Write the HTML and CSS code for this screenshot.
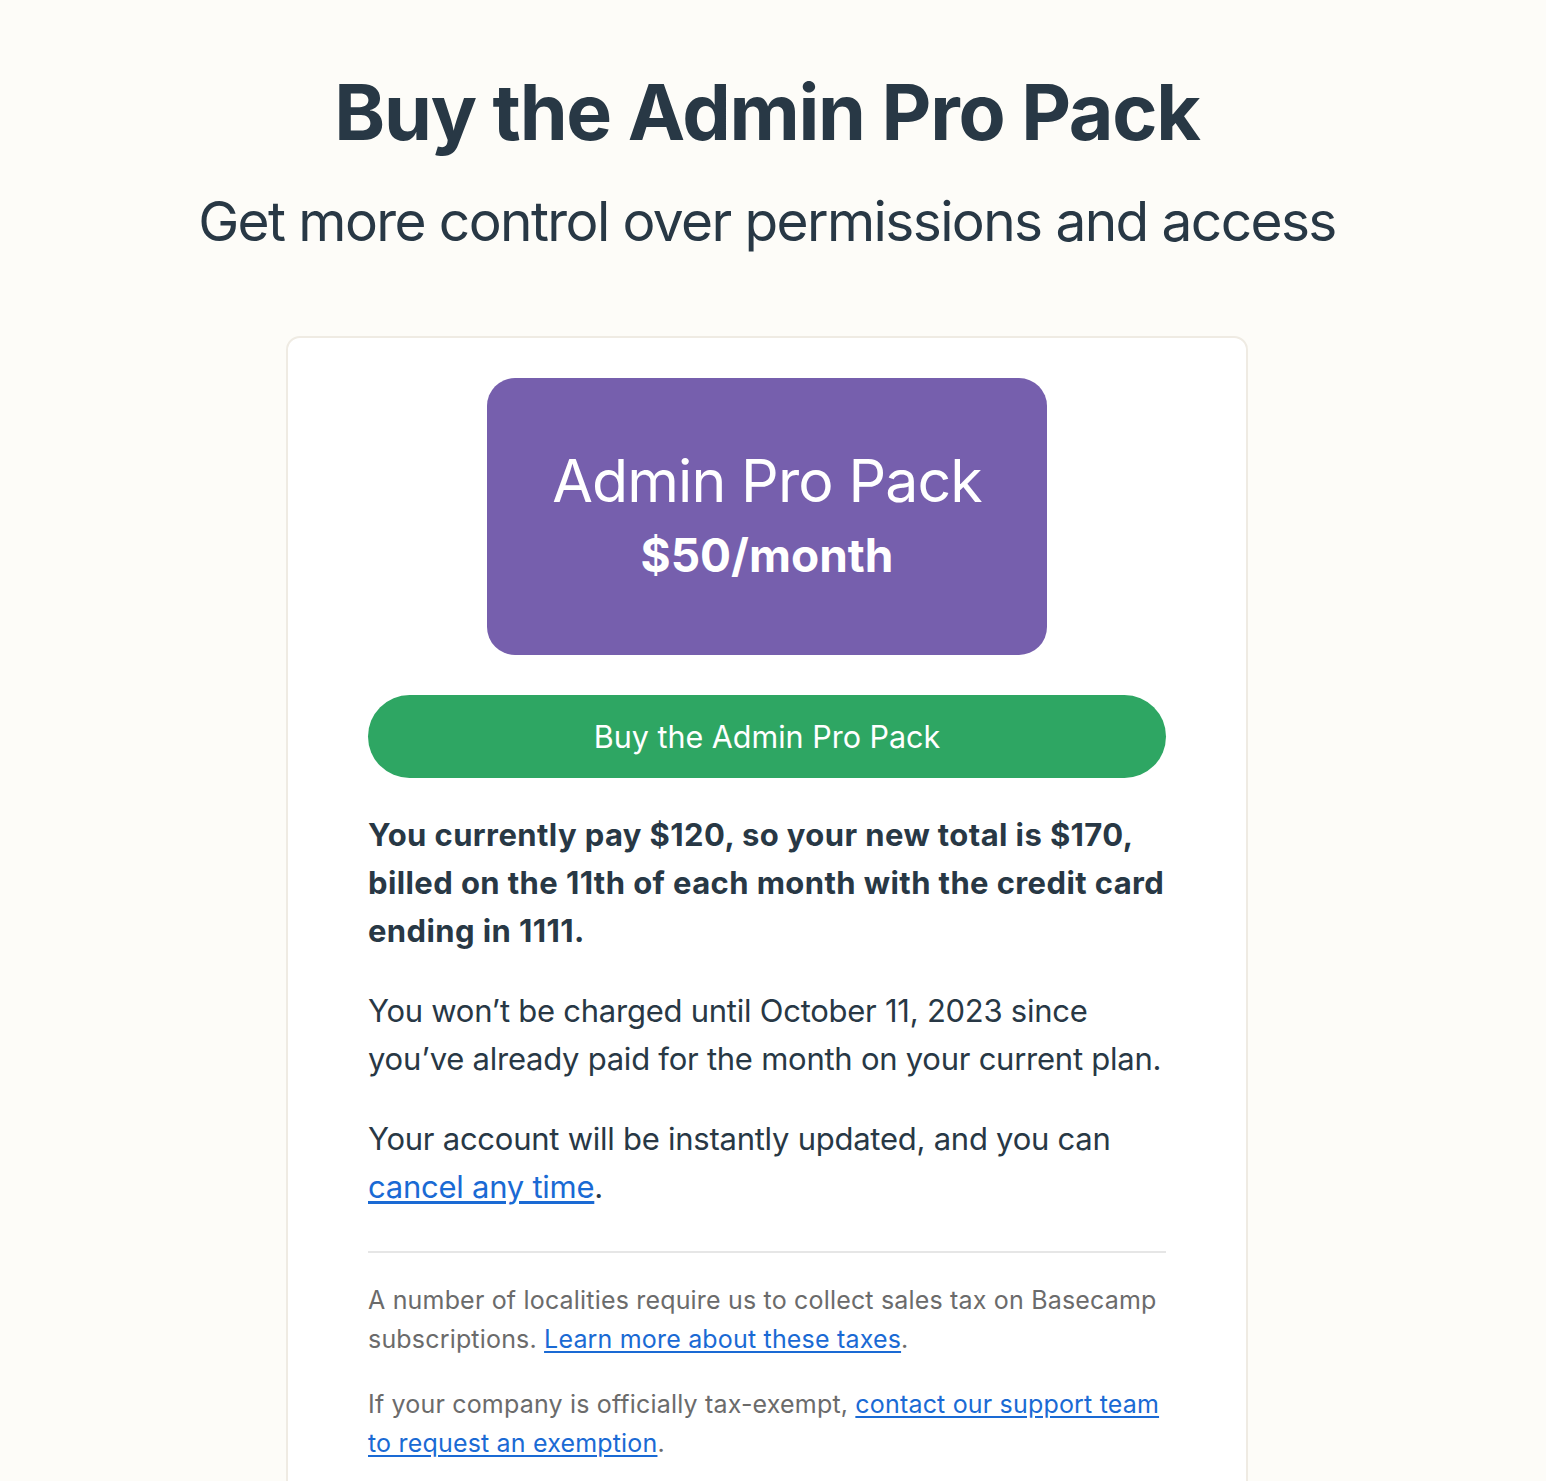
FILE: index.html
```html
<!DOCTYPE html>
<html lang="en">
<head>
<meta charset="utf-8">
<title>Buy the Admin Pro Pack</title>
<link rel="stylesheet" href="styles.css">
</head>
<body>
<main class="page">
  <header class="intro">
    <h1 class="title">Buy the Admin Pro Pack</h1>
    <p class="subtitle">Get more control over permissions and access</p>
  </header>
  <section class="card">
    <div class="pack">
      <div class="pack-name">Admin Pro Pack</div>
      <div class="pack-price">$50/month</div>
    </div>
    <button class="buy" type="button">Buy the Admin Pro Pack</button>
    <p class="text strong">You currently pay $120, so your new total is $170, billed on the 11th of each month with the credit card ending in 1111.</p>
    <p class="text">You won’t be charged until October 11, 2023 since you’ve already paid for the month on your current plan.</p>
    <p class="text">Your account will be instantly updated, and you can <a href="#" class="link">cancel any time</a>.</p>
    <hr class="divider">
    <p class="fine">A number of localities require us to collect sales tax on Basecamp subscriptions. <a href="#" class="link">Learn more about these taxes</a>.</p>
    <p class="fine">If your company is officially tax-exempt, <a href="#" class="link">contact our support team to request an exemption</a>.</p>
  </section>
</main>
</body>
</html>
```
FILE: styles.css
```css
html, body {
  margin: 0;
  padding: 0;
  background: #fdfcf8;
}
body {
  font-family: Inter, "Noto Sans", "Liberation Sans", sans-serif;
  color: #283845;
}
.page {
  display: flex;
  flex-direction: column;
  align-items: center;
  padding: 66px 12px 0 0;
}
.intro {
  text-align: center;
}
.title {
  margin: 0;
  font-size: 77px;
  font-weight: 700;
  line-height: 92px;
  letter-spacing: -1.3px;
}
.subtitle {
  margin: 27px 0 0;
  font-size: 55px;
  line-height: 72px;
  font-weight: 400;
  letter-spacing: -1.6px;
}
.card {
  box-sizing: border-box;
  width: 962px;
  margin-top: 79px;
  padding: 40px 80px 40px;
  background: #fff;
  border: 2px solid #efebe3;
  border-radius: 14px;
  display: flex;
  flex-direction: column;
}
.pack {
  align-self: center;
  width: 560px;
  height: 277px;
  box-sizing: border-box;
  background: #765fad;
  border-radius: 28px;
  color: #fff;
  display: flex;
  flex-direction: column;
  align-items: center;
  justify-content: center;
  padding-bottom: 8px;
}
.pack-name {
  font-size: 59px;
  line-height: 76px;
  font-weight: 400;
  letter-spacing: -0.9px;
}
.pack-price {
  margin-top: 8px;
  font-size: 46px;
  line-height: 56px;
  font-weight: 700;
}
.buy {
  margin-top: 40px;
  height: 83px;
  border: 0;
  border-radius: 42px;
  background: #2ea663;
  color: #fff;
  font-family: inherit;
  font-size: 30.5px;
  font-weight: 400;
  cursor: pointer;
}
.text {
  margin: 32px 0 0;
  font-size: 31px;
  line-height: 48px;
  letter-spacing: -0.25px;
}
.strong {
  font-weight: 700;
  margin-top: 33px;
  letter-spacing: 0.4px;
}
.link {
  color: #1a6ad4;
  text-decoration: underline;
  text-underline-offset: 3px;
}
.divider {
  margin: 40px 0 0;
  border: 0;
  border-top: 2px solid #e6e6e6;
  height: 0;
}
.fine {
  margin: 28px 0 0;
  font-size: 25px;
  line-height: 39px;
  letter-spacing: 0.18px;
  color: #6b6b6b;
}
.fine + .fine {
  margin-top: 26px;
}
```
